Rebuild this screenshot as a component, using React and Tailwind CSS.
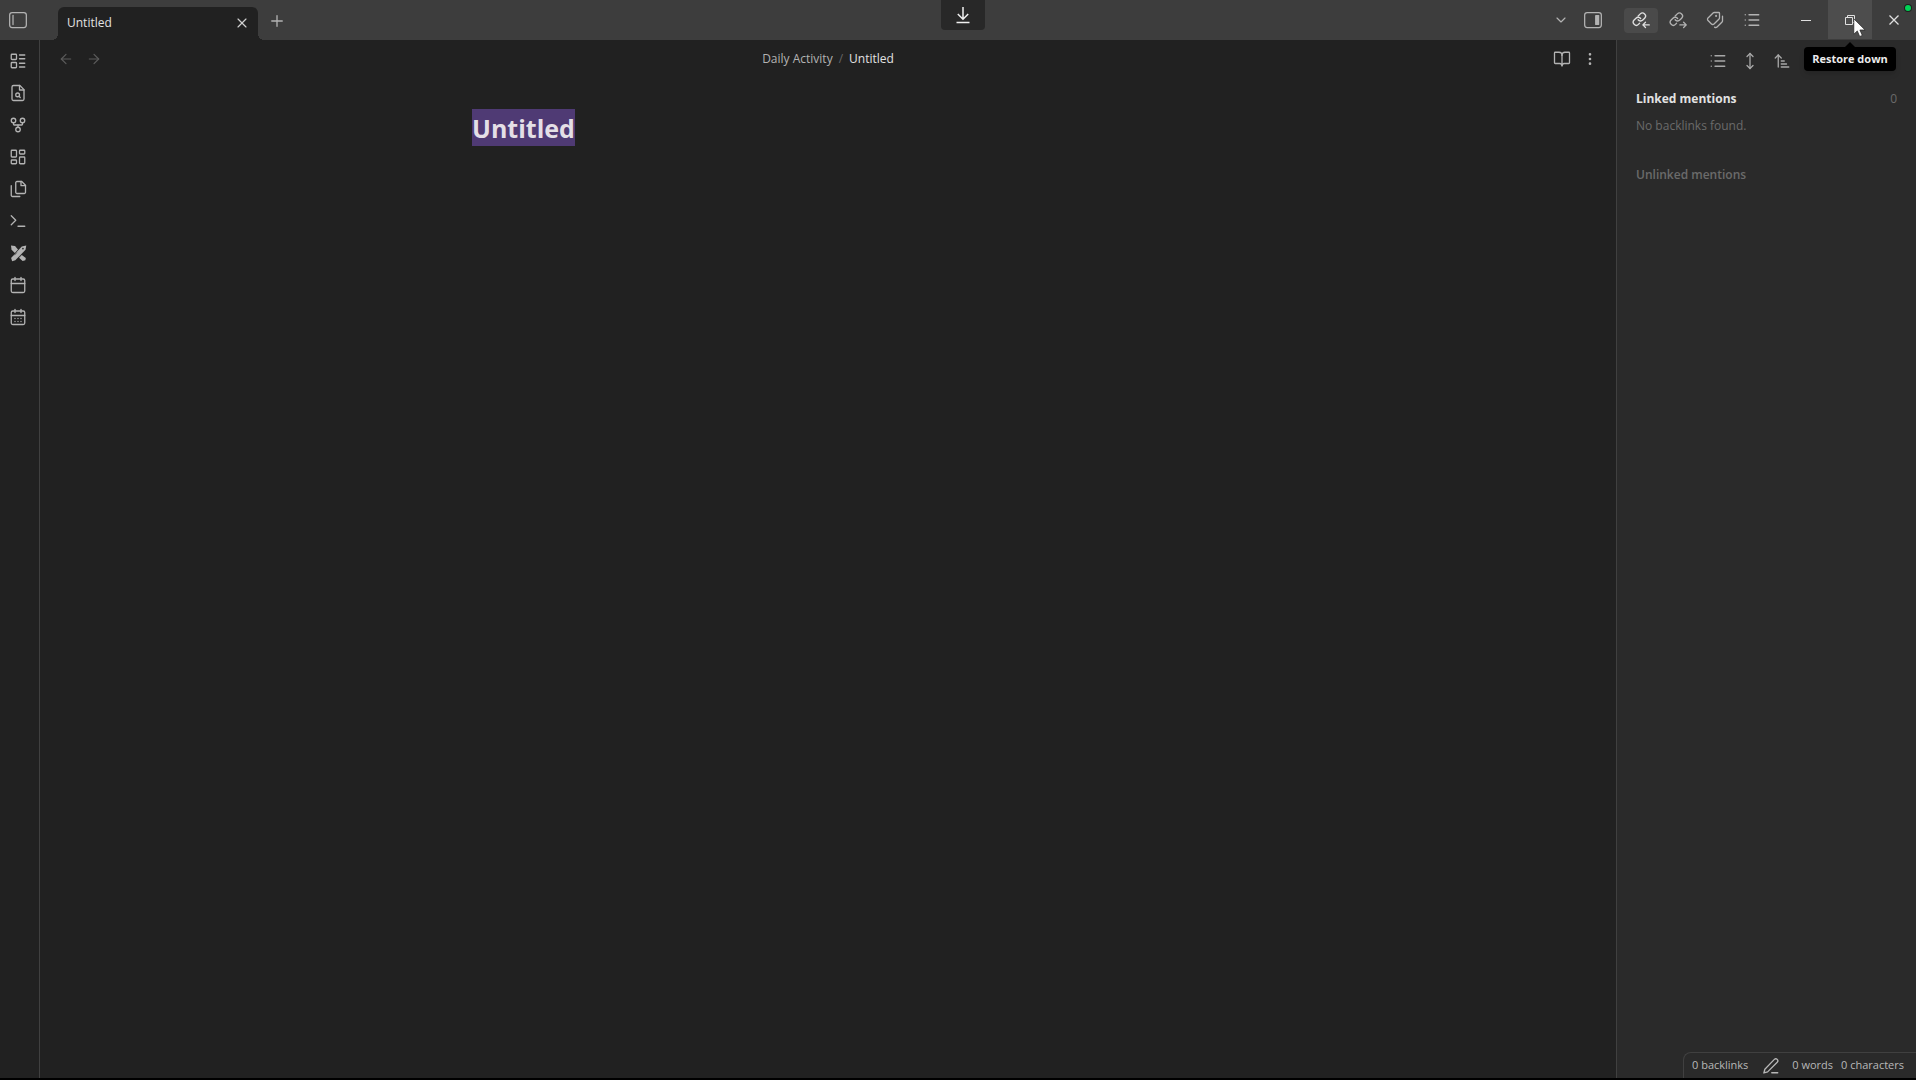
import {
  ArrowLeft,
  ArrowRight,
  ArrowUpNarrowWide,
  BookOpen,
  Calendar,
  CalendarDays,
  ChevronDown,
  EllipsisVertical,
  GitFork,
  LayoutDashboard,
  LayoutList,
  List,
  MoveVertical,
  Plus,
  Tags,
  X,
} from 'lucide-react';

const Svg = ({ size = 18, children, ...props }) => (
  <svg
    width={size}
    height={size}
    viewBox="0 0 24 24"
    fill="none"
    stroke="currentColor"
    strokeWidth="1.75"
    strokeLinecap="round"
    strokeLinejoin="round"
    aria-hidden="true"
    {...props}
  >
    {children}
  </svg>
);

const SidebarIcon = ({ side }) => (
  <Svg size={20}>
    <rect x="2" y="3" width="20" height="18" rx="3" strokeWidth="1.5" />
    {side === 'left' ? (
      <path d="M6 6.5v11" strokeWidth="1.5" />
    ) : (
      <rect x="14.5" y="6" width="5" height="12" rx="0.5" fill="currentColor" stroke="none" />
    )}
  </Svg>
);

const FileSearchIcon = () => (
  <Svg>
    <path d="M14.5 2H6a2 2 0 0 0-2 2v16a2 2 0 0 0 2 2h12a2 2 0 0 0 2-2V7.5L14.5 2z" />
    <path d="M14 2v6h6" />
    <circle cx="11.5" cy="14.5" r="2.5" />
    <path d="M13.3 16.3 15 18" />
  </Svg>
);

const FilesIcon = () => (
  <Svg>
    <path d="M17 2h-6.4c-.4 0-.8.2-1.1.5-.3.3-.5.7-.5 1.1v12.8c0 .4.2.8.5 1.1.3.3.7.5 1.1.5h9.8c.4 0 .8-.2 1.1-.5.3-.3.5-.7.5-1.1V7L17 2z" />
    <path d="M16 2v5.5h6" />
    <path d="M3 7.6v12.8c0 .4.2.8.5 1.1.3.3.7.5 1.1.5h9.8" />
  </Svg>
);

const TerminalIcon = () => (
  <Svg>
    <path d="m3 17 6-6-6-6" />
    <path d="M12 19h9" />
  </Svg>
);

const ExcalidrawIcon = () => (
  <Svg stroke="none" fill="currentColor">
    <path d="M2.6 2 8 2.6 12 7.4 7.8 12 3.4 7.6z" />
    <path d="M23 2 22 7.8 8.4 21.8 4.2 23 2.8 18.6 17 3.4z" />
    <path d="m16.6 14.2 5.8 4.6-.6 3-3.6.8-5.2-4.6z" />
    <circle cx="18.6" cy="6.2" r="1.1" fill="#212121" />
    <path d="m7.4 14.6 2.6-2.8M13 18.4l4-4.2" stroke="#212121" strokeWidth="0.9" />
  </Svg>
);

// chain link with a small arrow in its lower right corner
const LinkIcon = ({ direction }) => (
  <Svg>
    <g transform="translate(0 1) scale(.82)" strokeWidth="2.2">
      <path d="M10 13a5 5 0 0 0 7.54.54l3-3a5 5 0 0 0-7.07-7.07l-3.4 3.4" />
      <path d="M14 11a5 5 0 0 0-7.54-.54l-3 3a5 5 0 0 0 7.07 7.07l1.71-1.71" />
    </g>
    {direction === 'in' ? (
      <path d="M23 18.5h-8.500M18 15l-3.500 3.500 3.500 3.500" />
    ) : (
      <path d="M14.500 18.500H23M19.500 15l3.500 3.500-3.500 3.500" />
    )}
  </Svg>
);

const PenIcon = () => (
  <Svg>
    <path d="M13 21h8" />
    <path d="M16.5 3.2a2.6 2.6 0 0 1 3.8 3.8L7.5 19.8 2.5 21.3l1.3-5z" />
  </Svg>
);

const ribbonItems = [
  { label: 'Open quick switcher', icon: <LayoutList size={18} strokeWidth={1.75} /> },
  { label: 'Search in file', icon: <FileSearchIcon /> },
  { label: 'Open graph view', icon: <GitFork size={18} strokeWidth={1.75} /> },
  { label: 'Create new canvas', icon: <LayoutDashboard size={18} strokeWidth={1.75} /> },
  { label: 'Insert template', icon: <FilesIcon /> },
  { label: 'Open command palette', icon: <TerminalIcon /> },
  { label: 'New drawing', icon: <ExcalidrawIcon /> },
  { label: "Open today's daily note", icon: <Calendar size={18} strokeWidth={1.75} /> },
  { label: 'Open calendar', icon: <CalendarDays size={18} strokeWidth={1.75} /> },
];

const sideTabs = [
  { label: 'Backlinks', icon: <LinkIcon direction="in" />, active: true },
  { label: 'Outgoing links', icon: <LinkIcon direction="out" /> },
  { label: 'Tags', icon: <Tags size={18} strokeWidth={1.75} className="-scale-x-100" /> },
  { label: 'Outline', icon: <List size={18} strokeWidth={1.75} /> },
];

const IconButton = ({ label, className = '', children }) => (
  <button
    type="button"
    aria-label={label}
    className={`flex shrink-0 items-center justify-center ${className}`}
  >
    {children}
  </button>
);

const Tab = () => (
  <div className="relative flex h-[33px] w-50 items-center justify-between rounded-t-md bg-[#212121] pr-2 pb-0.5 pl-[9px]">
    <span className="absolute bottom-0 -left-1.5 size-1.5 bg-[radial-gradient(circle_at_0_0,transparent_6px,#212121_6px)]" />
    <span className="absolute -right-1.5 bottom-0 size-1.5 bg-[radial-gradient(circle_at_100%_0,transparent_6px,#212121_6px)]" />
    <span className="text-xs text-[#e2e2e2]">Untitled</span>
    <IconButton label="Close tab" className="size-4 text-[#d0d0d0]">
      <X size={16} strokeWidth={1.75} />
    </IconButton>
  </div>
);

const WindowControls = () => (
  <div className="flex h-[39px] text-[#e0e0e0]">
    <IconButton label="Minimize" className="w-11">
      <svg width="10" height="10" stroke="currentColor" aria-hidden="true">
        <path d="M0 5.5h10" />
      </svg>
    </IconButton>
    <div className="relative flex">
      <IconButton label="Restore down" className="w-11 bg-[#4d4d4d]">
        <svg width="10" height="10" fill="none" stroke="currentColor" aria-hidden="true">
          <path d="M.5 2.5h7v7h-7zM2.5 2.5v-2h7v7h-2" />
        </svg>
      </IconButton>
      <div
        role="tooltip"
        className="absolute top-[47px] left-1/2 z-10 flex h-6 w-[92px] -translate-x-1/2 items-center justify-center rounded bg-black text-[11px] font-bold whitespace-nowrap text-[#ececec] shadow-md"
      >
        <span className="absolute -top-[5px] border-x-[5px] border-b-[5px] border-x-transparent border-b-black" />
        Restore down
      </div>
      <svg
        className="absolute top-[18px] left-[25px] z-20"
        width="13"
        height="20"
        viewBox="0 0 13 20"
        aria-hidden="true"
      >
        <path d="M.8.8v15.4l3.5-3.3 2.4 5.6 2.6-1.1-2.4-5.400h5.200z" fill="#fff" stroke="#222" strokeWidth=".7" />
      </svg>
    </div>
    <IconButton label="Close window" className="w-11">
      <svg width="10" height="10" stroke="currentColor" strokeWidth="1.3" aria-hidden="true">
        <path d="M.5.5l9 9M9.5.5l-9 9" />
      </svg>
    </IconButton>
  </div>
);

const TitleBar = () => (
  <header className="relative flex h-10 shrink-0 bg-[#3d3d3d] text-[#b3b3b3]">
    <div className="flex w-[58px] items-center pl-2">
      <IconButton label="Collapse left sidebar" className="size-5">
        <SidebarIcon side="left" />
      </IconButton>
    </div>
    <div className="flex flex-1 items-end">
      <Tab />
      <IconButton label="New tab" className="ml-2 h-[38px] w-[22px]">
        <Plus size={18} strokeWidth={1.75} />
      </IconButton>
      <div className="ml-auto flex h-10 items-center gap-3.5 pr-[13px]">
        <IconButton label="Tab list" className="w-4">
          <ChevronDown size={16} strokeWidth={1.75} />
        </IconButton>
        <IconButton label="Collapse right sidebar" className="w-5">
          <SidebarIcon side="right" />
        </IconButton>
      </div>
    </div>
    <div className="flex w-[300px] justify-between">
      <div className="flex items-center gap-[3px] pl-2">
        {sideTabs.map(({ label, icon, active }) => (
          <IconButton
            key={label}
            label={label}
            className={active ? 'h-[25px] w-[34px] rounded bg-[#4a4a4a] text-[#e0e0e0]' : 'h-[25px] w-[34px]'}
          >
            {icon}
          </IconButton>
        ))}
      </div>
      <WindowControls />
    </div>
    <div className="absolute top-0 left-[calc(50%-17px)] flex h-[30px] w-11 items-center justify-center rounded-b bg-[#282828]">
      <svg width="14" height="18" fill="none" stroke="#f0f0f0" strokeWidth="1.5" aria-hidden="true">
        <path d="M7 1v12M1.8 8 7 13.2 12.2 8M.5 16.5h13" />
      </svg>
    </div>
    <span className="absolute top-[5px] right-[5px] size-1.5 rounded-full bg-[#00d456] ring-1 ring-black/50" />
  </header>
);

const Editor = () => (
  <main className="flex min-w-0 flex-1 flex-col">
    <div className="flex h-[38px] items-center justify-between pr-[17px] pl-[17px]">
      <div className="flex w-16 gap-2.5 text-[#5c5c5c]">
        <IconButton label="Navigate back" className="w-[18px]">
          <ArrowLeft size={16} strokeWidth={1.75} />
        </IconButton>
        <IconButton label="Navigate forward" className="w-[18px]">
          <ArrowRight size={16} strokeWidth={1.75} />
        </IconButton>
      </div>
      <nav className="flex gap-1.5 text-xs text-[#b3b3b3]" aria-label="Breadcrumb">
        <a href="#folder">Daily Activity</a>
        <span className="text-[#666]">/</span>
        <span className="text-[#e2e2e2]">Untitled</span>
      </nav>
      <div className="flex w-16 justify-end gap-2.5 text-[#b3b3b3]">
        <IconButton label="Reading view" className="w-[18px]">
          <BookOpen size={18} strokeWidth={1.75} />
        </IconButton>
        <IconButton label="More options" className="w-[18px]">
          <EllipsisVertical size={16} />
        </IconButton>
      </div>
    </div>
    <article className="mx-auto w-full max-w-[712px] pt-[31px]">
      <h1 className="text-[25px] leading-[35px] font-bold text-[#e4dfe6]">
        <span className="inline-block bg-[#4f3a74] pt-0.5">Untitled</span>
      </h1>
    </article>
  </main>
);

const BacklinksPanel = () => (
  <aside className="flex w-[300px] shrink-0 flex-col border-l border-[#404040] bg-[#2a2a2a] text-xs">
    <div className="flex h-[42px] items-center justify-center gap-3.5 pr-0.5 text-[#a8a8a8]">
      <IconButton label="Collapse results" className="w-[18px]">
        <List size={18} strokeWidth={1.75} />
      </IconButton>
      <IconButton label="Show more context" className="w-[18px]">
        <MoveVertical size={18} strokeWidth={1.75} />
      </IconButton>
      <IconButton label="Change sort order" className="w-[18px]">
        <ArrowUpNarrowWide size={18} strokeWidth={1.75} />
      </IconButton>
      <span className="w-[18px]" />
    </div>
    <div className="flex-1 px-[19px] pt-[7px] text-[#6b6b6b]">
      <div className="flex h-5 items-center justify-between">
        <h2 className="font-bold text-[#e2e2e2]">Linked mentions</h2>
        <span>0</span>
      </div>
      <p className="mt-[7px] flex h-5 items-center">No backlinks found.</p>
      <h2 className="mt-[29px] flex h-5 items-center font-semibold">Unlinked mentions</h2>
    </div>
    <footer className="flex h-[26px] w-[233px] items-center self-end rounded-tl-lg border-t border-l border-[#404040] pr-3 pl-2 text-[11px] text-[#b8b8b8]">
      <span>0 backlinks</span>
      <IconButton label="Editing mode" className="ml-3.5 size-[18px]">
        <PenIcon />
      </IconButton>
      <span className="ml-auto">0 words</span>
      <span className="ml-2">0 characters</span>
    </footer>
  </aside>
);

const App = () => (
  <div className="flex h-screen flex-col border-b-2 border-black bg-[#212121] font-['Open_Sans','Noto_Sans',sans-serif]">
    <TitleBar />
    <div className="flex min-h-0 flex-1">
      <nav
        aria-label="Ribbon"
        className="flex w-10 shrink-0 flex-col border-r border-[#404040] pt-[5px] text-[#b3b3b3]"
      >
        {ribbonItems.map(({ label, icon }) => (
          <IconButton key={label} label={label} className="mr-[3px] h-8">
            {icon}
          </IconButton>
        ))}
      </nav>
      <Editor />
      <BacklinksPanel />
    </div>
  </div>
);

export default App;
